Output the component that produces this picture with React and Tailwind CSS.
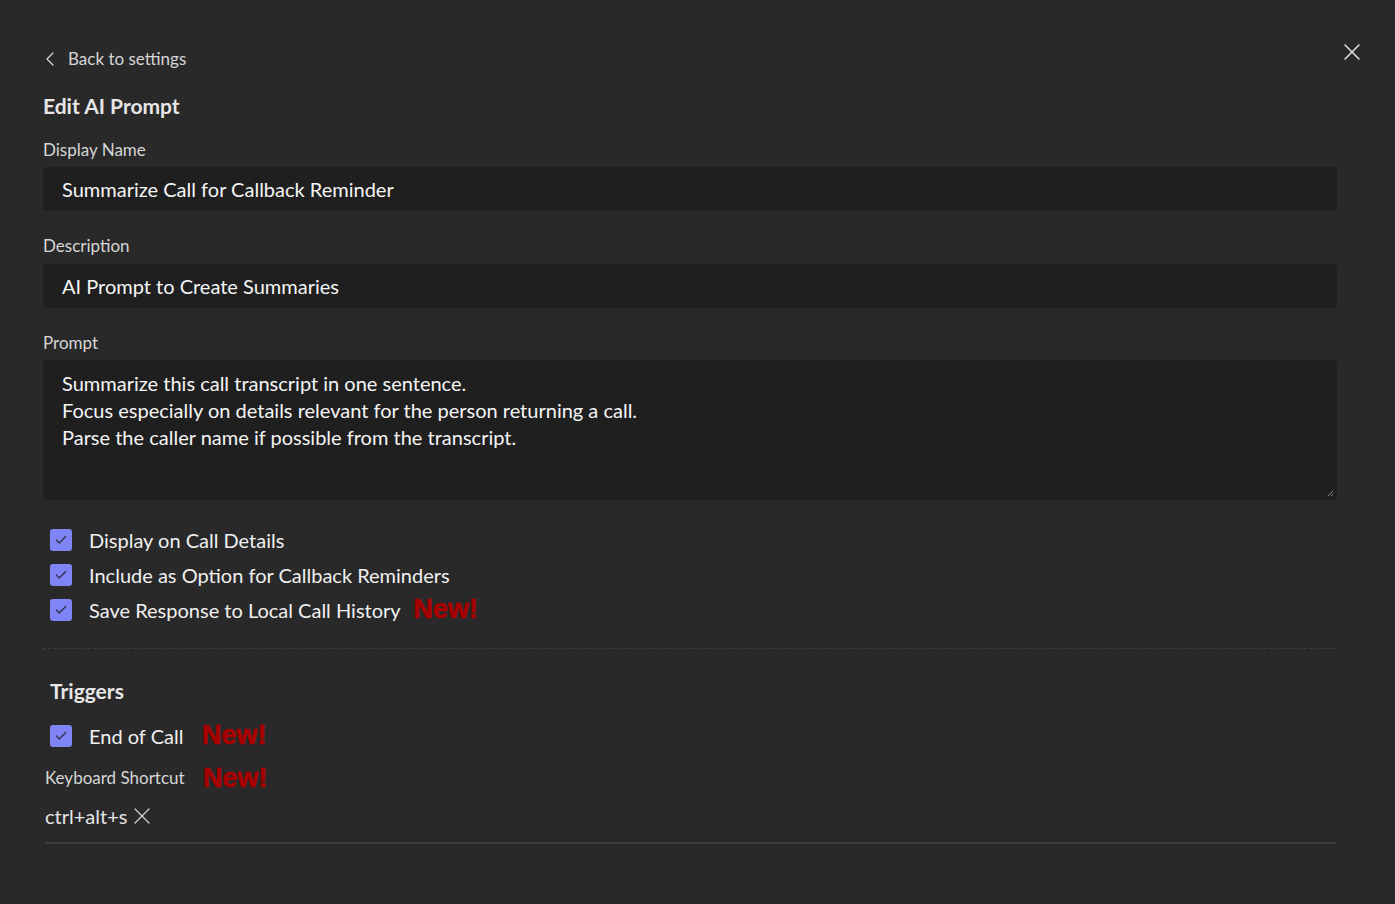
import { ChevronLeft, X, Check } from 'lucide-react';

const font = { fontFamily: '"Lato", "Segoe UI", "Noto Sans", sans-serif' };
const badgeFont = { fontFamily: '"Liberation Sans", Arial, sans-serif' };

const NewBadge = () => (
    <span className="text-[27px] font-bold text-[#a80000] leading-none [-webkit-text-stroke:0.7px_#a80000]" style={badgeFont}>New!</span>
);

const CheckRow = ({ label, isNew, labelWidth }) => (
    <div className="flex items-center h-[35px]">
        <div className="w-[22px] h-[22px] rounded-[3px] bg-[#7f85f5] flex items-center justify-center ml-[7px]">
            <Check size={14} strokeWidth={2.4} className="text-[#33344a]" />
        </div>
        <span className="ml-[17px] text-[20px] text-[#f0f0f0]" style={labelWidth ? { width: labelWidth } : undefined}>{label}</span>
        {isNew && <span className={labelWidth ? '' : 'ml-[13px]'}><NewBadge /></span>}
    </div>
);

export default function App() {
    return (
        <div className="min-h-[904px] w-full bg-[#292929] text-white relative" style={font}>
            {/* Close */}
            <button className="absolute top-[38px] right-[29px] text-[#d6d6d6]">
                <X size={28} strokeWidth={1.5} />
            </button>

            <div className="pl-[43px] pr-[58px] pt-[47px]">
                {/* Back link */}
                <div className="flex items-center text-[#d6d6d6] text-[17px] h-[24px]">
                    <ChevronLeft size={24} strokeWidth={1.3} className="ml-[-5px]" />
                    <span className="ml-[6px]">Back to settings</span>
                </div>

                <h2 className="mt-[23px] text-[21px] font-bold text-[#e6e6e6] leading-[24px]">Edit AI Prompt</h2>

                {/* Display name */}
                <div className="mt-[21px] text-[17px] text-[#d6d6d6] leading-[22px]">Display Name</div>
                <div className="mt-[6px] h-[44px] rounded-[4px] bg-[#1f1f1f] flex items-center px-[19px] text-[20px] text-[#f5f5f5]">
                    Summarize Call for Callback Reminder
                </div>

                {/* Description */}
                <div className="mt-[24px] text-[17px] text-[#d6d6d6] leading-[22px]">Description</div>
                <div className="mt-[7px] h-[44px] rounded-[4px] bg-[#1f1f1f] flex items-center px-[19px] text-[20px] text-[#f5f5f5]">
                    AI Prompt to Create Summaries
                </div>

                {/* Prompt */}
                <div className="mt-[24px] text-[17px] text-[#d6d6d6] leading-[22px]">Prompt</div>
                <div className="mt-[6px] h-[140px] rounded-[4px] bg-[#1f1f1f] px-[19px] pt-[10px] text-[20px] leading-[27px] text-[#f5f5f5] relative">
                    <div>Summarize this call transcript in one sentence.</div>
                    <div>Focus especially on details relevant for the person returning a call.</div>
                    <div>Parse the caller name if possible from the transcript.</div>
                    <svg className="absolute right-[3px] bottom-[3px]" width="8" height="8" viewBox="0 0 8 8">
                        <path d="M7 2 L2 7 M7 5 L5 7" stroke="#8a8a8a" strokeWidth="1" />
                    </svg>
                </div>

                {/* Options */}
                <div className="mt-[22px] flex flex-col">
                    <CheckRow label="Display on Call Details" />
                    <CheckRow label="Include as Option for Callback Reminders" />
                    <CheckRow label="Save Response to Local Call History" isNew />
                </div>

                <div className="mt-[21px] border-t border-dashed border-[#3c3c3c]" />

                <div className="mt-[30px] ml-[7px] text-[21px] font-bold text-[#e6e6e6] leading-[24px]">Triggers</div>

                <div className="mt-[15px]">
                    <CheckRow label="End of Call" isNew labelWidth={113} />
                </div>

                <div className="mt-[10px] ml-[2px] flex items-center h-[30px]">
                    <span className="text-[17px] text-[#d6d6d6] w-[158px]">Keyboard Shortcut</span>
                    <NewBadge />
                </div>

                <div className="mt-[9px] ml-[2px] flex items-center h-[28px] text-[20px] text-[#e6e6e6]">
                    <span>ctrl+alt+s</span>
                    <X size={28} strokeWidth={1.1} className="ml-[1px] text-[#cfcfcf]" />
                </div>

                <div className="mt-[12px] ml-[2px] mr-[1px] h-[2px] bg-[#3d3d3d]" />
            </div>
        </div>
    );
}
